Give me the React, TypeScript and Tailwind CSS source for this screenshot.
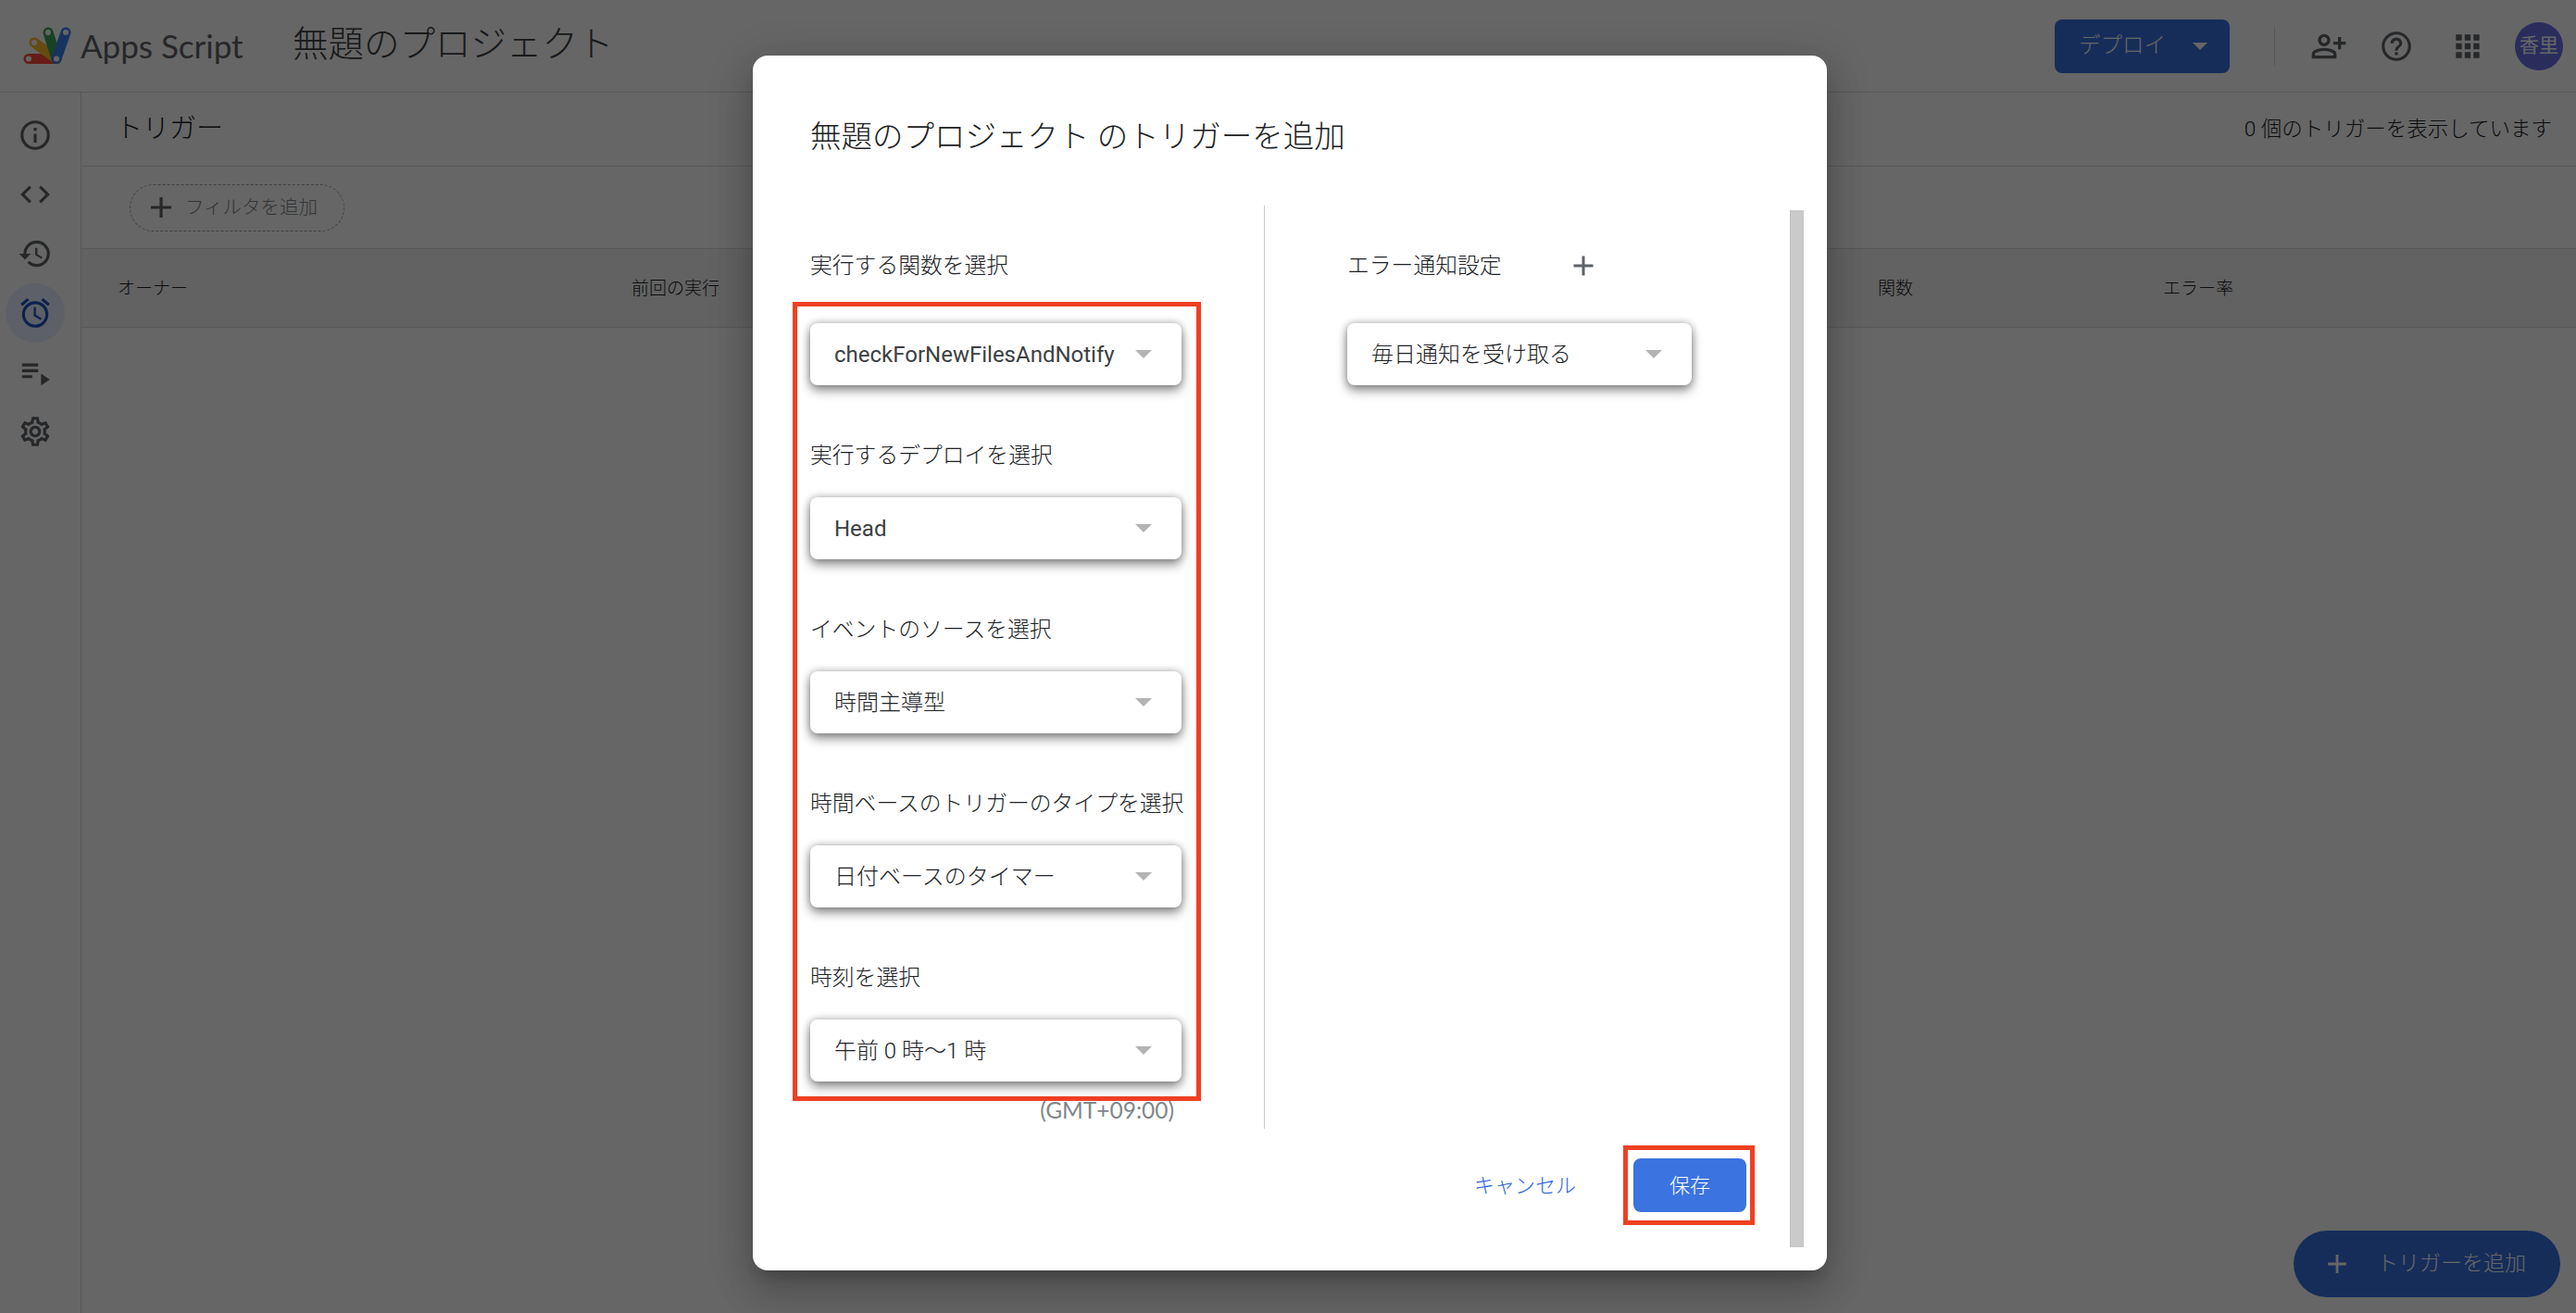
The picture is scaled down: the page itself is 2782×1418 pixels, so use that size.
import React from 'react';
import {
  MdAdd,
  MdAlarm,
  MdApps,
  MdHelpOutline,
  MdHistory,
  MdInfoOutline,
  MdOutlineCode,
  MdOutlinePersonAddAlt,
  MdOutlineSettings,
  MdPlaylistPlay,
} from 'react-icons/md';

const font = "font-['Roboto','Noto_Sans_CJK_JP',sans-serif]";

function Logo() {
  return (
    <svg width="52" height="41" viewBox="0 0 52 41" fill="none" strokeLinecap="round" strokeWidth="11">
      <line x1="6" y1="34.5" x2="36" y2="34.5" stroke="#ff4a35" />
      <line x1="12" y1="17" x2="36" y2="34.5" stroke="#fdb92e" />
      <line x1="27" y1="6" x2="36" y2="34.5" stroke="#3aa657" />
      <line x1="46" y1="6" x2="36" y2="34.5" stroke="#3f7fee" />
      <g fill="#ffffff">
        <circle cx="6" cy="34.5" r="3" />
        <circle cx="12" cy="17" r="3" />
        <circle cx="27" cy="6" r="3" />
        <circle cx="46" cy="6" r="3" />
        <circle cx="36" cy="34.5" r="3" />
      </g>
    </svg>
  );
}

function Select({ value, wide, latin }: { value: string; wide?: boolean; latin?: boolean }) {
  return (
    <div
      className={`${wide ? 'w-[401px]' : 'w-[372px]'} h-[67px] flex items-center justify-between pl-[26px] pr-[32px] bg-white rounded-[8px] shadow-[0_6px_12px_rgba(0,0,0,0.4),0_0_8px_rgba(0,0,0,0.3)] text-[24px] text-[#202124]`}
    >
      <span className={`whitespace-nowrap ${latin ? 'font-normal text-[#3c4043]' : 'font-light'}`}>{value}</span>
      <div className="w-0 h-0 border-x-[9px] border-x-transparent border-t-[9px] border-t-[#b4b4b4]" />
    </div>
  );
}

function Field({ label }: { label: string }) {
  return <div className="h-[30px] leading-[30px] text-[23.8px] text-[#202124] whitespace-nowrap">{label}</div>;
}

const groups = [
  { label: '実行するデプロイを選択', value: 'Head', latin: true },
  { label: 'イベントのソースを選択', value: '時間主導型' },
  { label: '時間ベースのトリガーのタイプを選択', value: '日付ベースのタイマー' },
  { label: '時刻を選択', value: '午前 0 時〜1 時' },
];

const navIcons = [MdInfoOutline, MdOutlineCode, MdHistory, MdAlarm, MdPlaylistPlay, MdOutlineSettings];

export default function App() {
  return (
    <div className={`${font} font-light relative w-screen h-screen overflow-hidden bg-white flex flex-col`}>
      {/* header */}
      <header className="h-[100px] shrink-0 flex items-center border-b border-[#dadce0] pl-[25px] pr-[14px]">
        <Logo />
        <span className="ml-[10px] w-[174px] text-[35px] font-normal text-[#5f6368] font-['Lato',sans-serif] whitespace-nowrap">Apps Script</span>
        <span className="ml-[55px] -mt-[3px] text-[38.5px] text-[#3c4043] whitespace-nowrap">無題のプロジェクト</span>
        <div className="ml-auto w-[189px] h-[58px] rounded-[8px] bg-[#3971e1] flex items-center justify-between pl-[26px] pr-[24px] text-white text-[23.5px]">
          <span>デプロイ</span>
          <div className="w-0 h-0 border-x-[8px] border-x-transparent border-t-[8px] border-t-white" />
        </div>
        <div className="ml-[48px] w-px h-[42px] bg-[#dadce0]" />
        <MdOutlinePersonAddAlt className="ml-[38px] text-[#5f6368]" size={40} />
        <MdHelpOutline className="ml-[34px] text-[#5f6368]" size={38} />
        <MdApps className="ml-[39px] text-[#5f6368]" size={38} />
        <div className="ml-[32px] w-[52px] h-[52px] rounded-full bg-[#6971e6] text-white text-[21px] font-normal flex items-center justify-center">香里</div>
      </header>

      <div className="flex flex-1 min-h-0">
        {/* side nav */}
        <nav className="w-[88px] shrink-0 border-r border-[#dadce0] pt-[14px] pl-[6px]">
          {navIcons.map((Icon, i) => (
            <div
              key={i}
              className={`w-[64px] h-[64px] rounded-full flex items-center justify-center ${i === 3 ? 'bg-[#e8f0fe] text-[#1a56c4]' : 'text-[#5f6368]'}`}
            >
              <Icon size={38} />
            </div>
          ))}
        </nav>

        <main className="flex-1 flex flex-col">
          <div className="h-[80px] border-b border-[#dadce0] flex items-center justify-between pl-[37px] pr-[26px]">
            <span className="text-[29px] text-[#202124]">トリガー</span>
            <span className="text-[22.5px] text-[#202124]">0 個のトリガーを表示しています</span>
          </div>
          <div className="h-[88px] flex items-center pl-[52px]">
            <div className="w-[232px] h-[51px] rounded-[26px] border border-dashed border-[#9aa0a6] flex items-center pl-[14px] text-[20.5px] text-[#80868b]">
              <MdAdd className="text-[#5f6368]" size={38} />
              <span className="ml-[7px]">フィルタを追加</span>
            </div>
          </div>
          <div className="h-[86px] bg-[#f5f5f5] border-y border-[#dadce0] flex items-center pt-[3px] pl-[39px] text-[19px] text-[#202124]">
            <span className="w-[555px]">オーナー</span>
            <span className="w-[1346px]">前回の実行</span>
            <span className="w-[308px]">関数</span>
            <span>エラー率</span>
          </div>
        </main>
      </div>

      {/* add trigger fab */}
      <div className="absolute right-[17px] bottom-[17px] w-[288px] h-[72px] rounded-full bg-[#3971e1] flex items-center pl-[30px] text-white text-[23px]">
        <MdAdd size={34} />
        <span className="ml-[26px]">トリガーを追加</span>
      </div>

      <div className="absolute inset-0 bg-black/60" />

      {/* dialog */}
      <div className="absolute left-[813px] top-[60px] w-[1160px] h-[1312px] bg-white rounded-[16px] flex shadow-[0_11px_15px_-7px_rgba(0,0,0,0.2),0_24px_38px_3px_rgba(0,0,0,0.14),0_9px_46px_8px_rgba(0,0,0,0.12)]">
        <div className="w-[1120px] flex flex-col">
          <div className="h-[162px] pt-[66px] pl-[62px] text-[33.5px] leading-[44px] text-[#202124]">無題のプロジェクト のトリガーを追加</div>
          <div className="flex h-[997px]">
            <div className="w-[553px] border-r border-[#c8c8c8] pt-[50px] pl-[62px]">
              <Field label="実行する関数を選択" />
              <div className="mt-[24px] -ml-[19px] w-[441px] h-[863px] border-[5px] border-[#ee4023] pt-[18px] pl-[14px]">
                <Select value="checkForNewFilesAndNotify" wide latin />
                {groups.map((g) => (
                  <div key={g.label} className="mt-[61px]">
                    <Field label={g.label} />
                    <div className="mt-[30px]">
                      <Select value={g.value} wide latin={g.latin} />
                    </div>
                  </div>
                ))}
              </div>
              <div className="-mt-[5px] w-[393px] text-right text-[24.5px] leading-[29px] font-normal text-[#80868b] font-['Lato',sans-serif]">(GMT+09:00)</div>
            </div>
            <div className="flex-1 pt-[50px] pl-[89px]">
              <div className="flex items-center h-[30px]">
                <Field label="エラー通知設定" />
                <MdAdd className="ml-[70px] text-[#5f6368]" size={36} />
              </div>
              <div className="mt-[47px]">
                <Select value="毎日通知を受け取る" />
              </div>
            </div>
          </div>
          <div className="mt-[18px] pr-[38px] flex justify-end items-center">
            <span className="mr-[51px] text-[22px] text-[#2a62d8]">キャンセル</span>
            <div className="border-[5px] border-[#ee4023] pl-[6px] pr-[4px] py-[9px]">
              <div className="w-[122px] h-[58px] rounded-[8px] bg-[#3b73e0] text-white text-[22px] flex items-center justify-center">保存</div>
            </div>
          </div>
        </div>
        <div className="mt-[167px] w-[15px] h-[1120px] bg-[#cacaca] border-l border-[#bdbdbd]" />
      </div>
    </div>
  );
}
